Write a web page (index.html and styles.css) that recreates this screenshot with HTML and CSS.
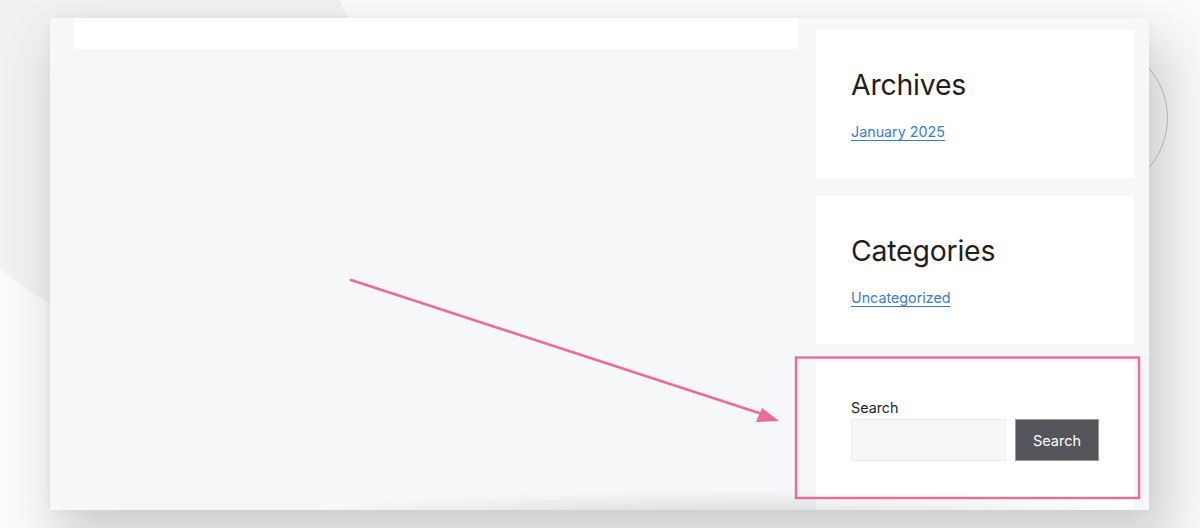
FILE: index.html
```html
<!DOCTYPE html>
<html lang="en">
<head>
    <meta charset="UTF-8">
    <title>Sidebar widgets</title>
    <link rel="stylesheet" href="styles.css">
</head>
<body>

<div class="stage">
    <div class="blob"></div>
    <div class="ring"></div>

    <div class="frame">
        <div class="content">
            <div class="top-bar"></div>
        </div>

        <aside class="sidebar">
            <div class="widget">
                <h2>Archives</h2>
                <a href="#">January 2025</a>
            </div>
            <div class="widget">
                <h2>Categories</h2>
                <a href="#">Uncategorized</a>
            </div>
            <div class="widget widget-search">
                <label for="s">Search</label>
                <div class="search-row">
                    <input type="text" id="s">
                    <button>Search</button>
                </div>
            </div>
        </aside>

        <div class="bottom-haze"></div>
    </div>

    <!-- annotation: arrow + highlight box -->
    <svg class="notes" width="1200" height="528" viewBox="0 0 1200 528">
        <line x1="351" y1="280" x2="762" y2="414" stroke="#ec6a9c" stroke-width="2.6" stroke-linecap="round"/>
        <polygon points="779,421 756,422 762,408" fill="#ec6a9c"/>
        <rect x="796" y="357.5" width="343" height="140.5" fill="none" stroke="#ec6a9c" stroke-width="2.4"/>
    </svg>
</div>

</body>
</html>
```

FILE: styles.css
```css
body {
    margin: 0;
    background-color: #fbfbfb;
    font-family: 'Inter', 'Liberation Sans', Arial, sans-serif;
}

.stage {
    position: relative;
    width: 1200px;
    height: 528px;
    overflow: hidden;
    padding-top: 18px;
    box-sizing: border-box;
}

/* decorative background shapes */
.blob {
    position: absolute;
    left: -71px;
    top: -112px;
    width: 438px;
    height: 438px;
    border-radius: 50%;
    background-color: #f1f1f1;
}

.ring {
    position: absolute;
    left: 1016px;
    top: 42px;
    width: 150px;
    height: 150px;
    border-radius: 50%;
    border: 1px solid #c4c4c4;
}

.frame {
    position: relative;
    margin-left: 50px;
    width: 1099px;
    height: 492px;
    background-color: #f6f7f9;
    display: flex;
    gap: 18px;
    padding: 0 15px 0 24px;
    box-sizing: border-box;
    box-shadow: 14px 30px 50px 8px rgba(0, 0, 0, 0.17), 0 0 10px rgba(0, 0, 0, 0.04);
    overflow: hidden;
}

.content {
    width: 724px;
}

.top-bar {
    height: 31px;
    background-color: #fff;
}

.sidebar {
    width: 318px;
    padding-top: 12px;
    display: flex;
    flex-direction: column;
    gap: 18px;
}

.widget {
    background-color: #fff;
    padding: 37px 35px 36px 35px;
    min-height: 148px;
    box-sizing: border-box;
}

.widget h2 {
    margin: 0 0 18px 0;
    font-size: 28.4px;
    font-weight: 400;
    line-height: 36px;
    color: #1e1e1e;
    letter-spacing: -0.2px;
}

.widget a {
    font-size: 14.3px;
    color: #3b7bcc;
    text-decoration: underline;
    text-underline-offset: 3px;
}

.widget-search {
    padding-top: 35px;
    flex: 1;
}

.widget-search label {
    display: block;
    font-size: 14.3px;
    color: #1e1e1e;
    line-height: 22px;
    margin-bottom: 0;
}

.search-row {
    display: flex;
    gap: 9px;
}

.search-row input {
    width: 155px;
    height: 42px;
    box-sizing: border-box;
    background-color: #f6f7f9;
    border: 1px solid #ececec;
    margin: 0;
}

.search-row button {
    width: 84px;
    height: 42px;
    background-color: #55555c;
    color: #fff;
    border: 1px solid #9a9a9e;
    font-family: 'Inter', 'Liberation Sans', Arial, sans-serif;
    font-size: 14.5px;
    padding: 0;
}

/* soft shadow falling on the bottom of the frame */
.bottom-haze {
    position: absolute;
    left: 230px;
    right: -60px;
    bottom: -40px;
    height: 60px;
    border-radius: 50%;
    background: radial-gradient(ellipse at center, rgba(0, 0, 0, 0.14) 0%, rgba(0, 0, 0, 0.05) 45%, rgba(0, 0, 0, 0) 70%);
    pointer-events: none;
}

.notes {
    position: absolute;
    left: 0;
    top: 0;
    pointer-events: none;
}
```
